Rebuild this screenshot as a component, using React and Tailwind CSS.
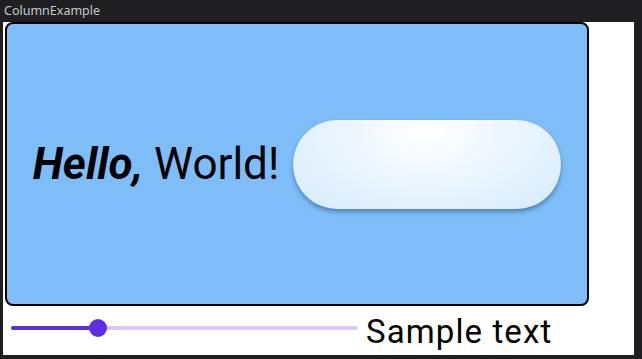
export default function App() {
  return (
    <div className="w-[642px] h-[359px] bg-[#1f1f21] flex flex-col overflow-hidden">
      <div className="h-[22px] flex items-center pl-[4px] text-[12.5px] text-[#c9c9c9]" style={{ fontFamily: '"Noto Sans", Inter, sans-serif' }}>
        ColumnExample
      </div>
      <div className="ml-[3px] w-[631px] h-[333px] bg-white flex flex-col">
        <div className="ml-[2px] w-[584px] h-[284px] bg-[#7fbdf8] border-2 border-black rounded-[8px] flex items-center justify-center gap-[14px]">
          <div className="text-[44px] text-black leading-none" style={{ fontFamily: 'Roboto, sans-serif' }}>
            <span className="font-bold italic">Hello,</span> World!
          </div>
          <div className="w-[268px] h-[89px] rounded-full bg-[radial-gradient(ellipse_at_50%_15%,#ffffff_0%,#eef7fe_40%,#d6eafb_100%)] shadow-[0_3px_4px_rgba(20,60,110,0.45)]" />
        </div>
        <div className="flex-1 flex items-start">
          <div className="ml-[8px] mt-[20px] w-[347px] h-[4px] relative rounded-full bg-[#d7c9f7]">
            <div className="absolute left-0 top-0 h-[4px] w-[88px] rounded-full bg-[#5a2fe3]" />
            <div className="absolute left-[78px] top-[-7px] w-[18px] h-[18px] rounded-full bg-[#5a2fe3]" />
          </div>
          <div className="ml-[8px] mt-[6px] text-[33px] tracking-[1.1px] text-black" style={{ fontFamily: 'Roboto, sans-serif', lineHeight: 'normal' }}>
            Sample text
          </div>
        </div>
      </div>
    </div>
  );
}
